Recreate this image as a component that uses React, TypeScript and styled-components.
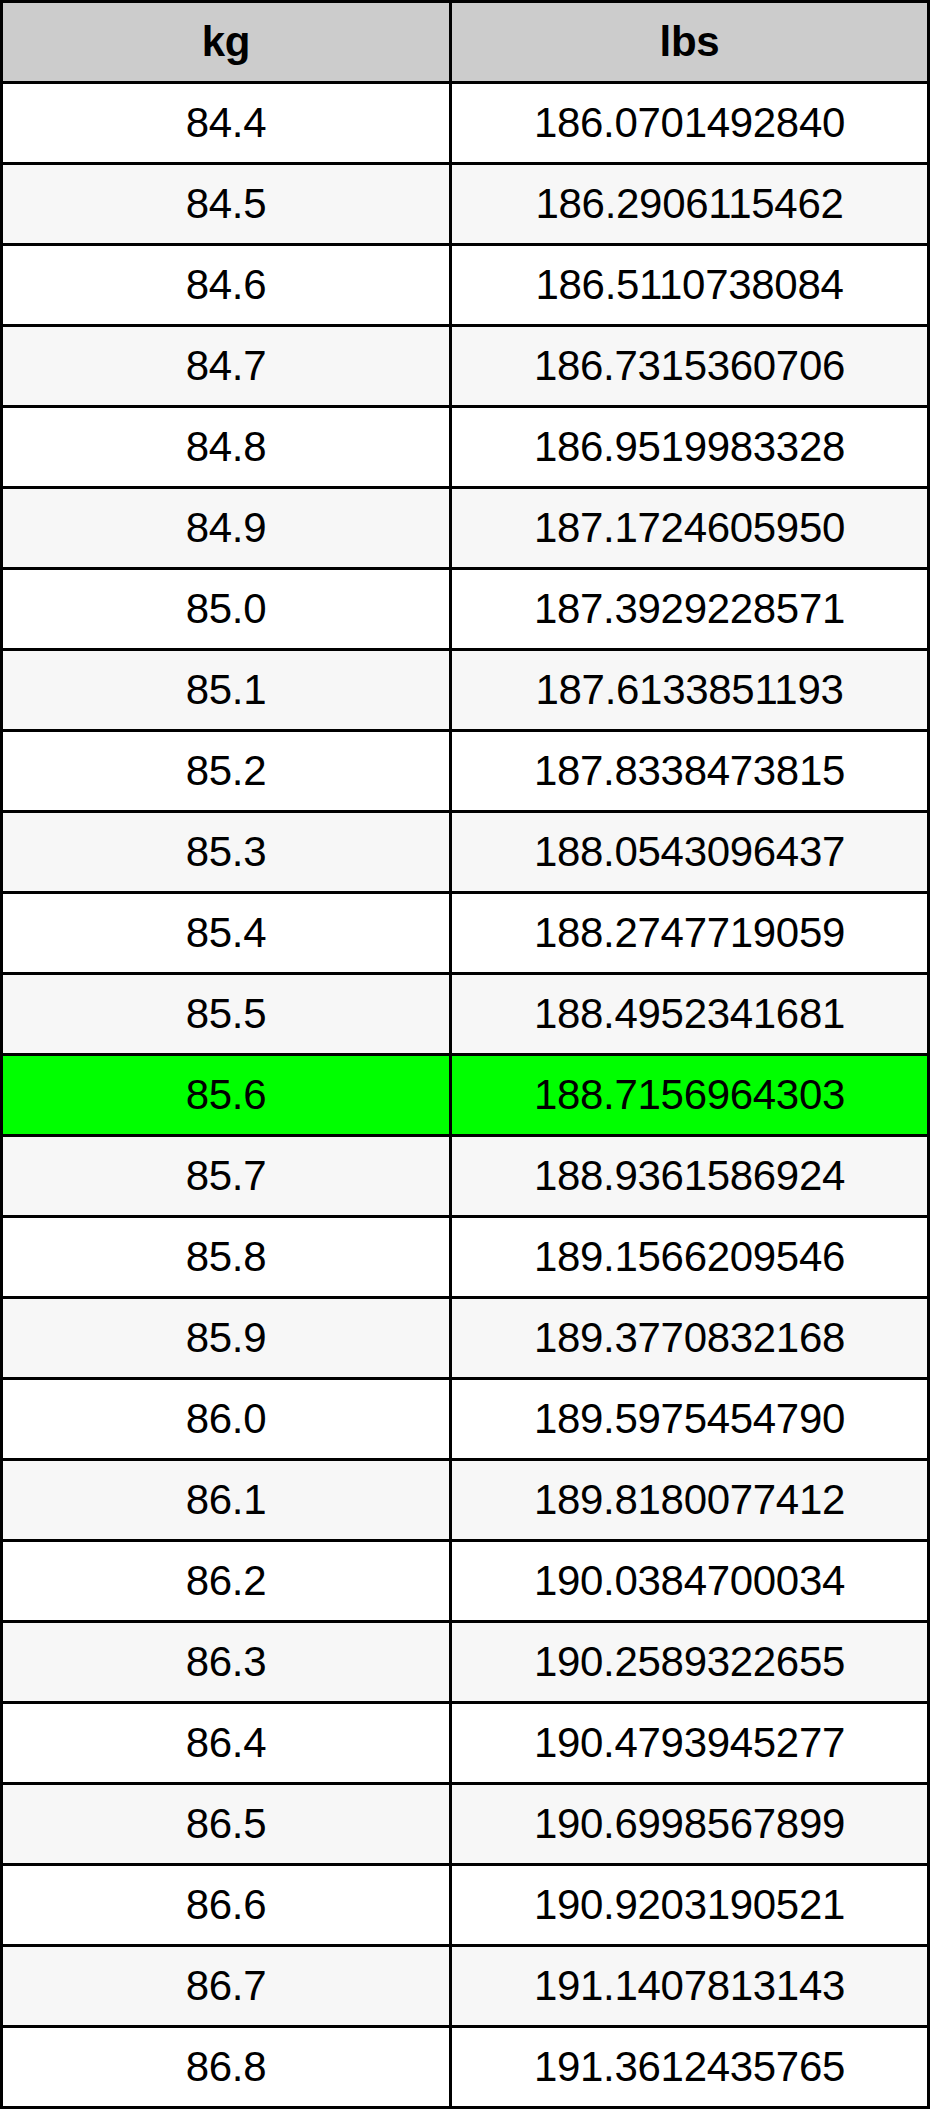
import React from 'react'
import styled, { createGlobalStyle } from 'styled-components'

const GlobalStyle = createGlobalStyle`
  html, body {
    margin: 0;
    padding: 0;
    background: #fff;
  }
`

const Table = styled.table`
  width: 930px;
  table-layout: fixed;
  border-collapse: separate;
  border-spacing: 3px;
  background: #000;
  font-family: 'Liberation Sans', Arial, sans-serif;
  font-size: 42px;
  letter-spacing: -0.3px;
  color: #000;
`

const HeadCell = styled.th`
  height: 78px;
  padding: 0;
  background: #ccc;
  font-weight: bold;
  text-align: center;
  vertical-align: middle;
`

const Cell = styled.td<{ $tone: 'plain' | 'shade' | 'hit' }>`
  height: 78px;
  padding: 0;
  text-align: center;
  vertical-align: middle;
  background: ${p => (p.$tone === 'hit' ? '#00ff00' : p.$tone === 'shade' ? '#f7f7f7' : '#fff')};
`

const rows: [string, string][] = [
  ['84.4', '186.0701492840'],
  ['84.5', '186.2906115462'],
  ['84.6', '186.5110738084'],
  ['84.7', '186.7315360706'],
  ['84.8', '186.9519983328'],
  ['84.9', '187.1724605950'],
  ['85.0', '187.3929228571'],
  ['85.1', '187.6133851193'],
  ['85.2', '187.8338473815'],
  ['85.3', '188.0543096437'],
  ['85.4', '188.2747719059'],
  ['85.5', '188.4952341681'],
  ['85.6', '188.7156964303'],
  ['85.7', '188.9361586924'],
  ['85.8', '189.1566209546'],
  ['85.9', '189.3770832168'],
  ['86.0', '189.5975454790'],
  ['86.1', '189.8180077412'],
  ['86.2', '190.0384700034'],
  ['86.3', '190.2589322655'],
  ['86.4', '190.4793945277'],
  ['86.5', '190.6998567899'],
  ['86.6', '190.9203190521'],
  ['86.7', '191.1407813143'],
  ['86.8', '191.3612435765'],
]

const highlight = '85.6'

export default function App() {
  return (
    <>
      <GlobalStyle />
      <Table>
        <colgroup>
          <col style={{ width: 446 }} />
          <col style={{ width: 475 }} />
        </colgroup>
        <thead>
          <tr>
            <HeadCell>kg</HeadCell>
            <HeadCell>lbs</HeadCell>
          </tr>
        </thead>
        <tbody>
          {rows.map(([kg, lbs], i) => {
            const tone = kg === highlight ? 'hit' : i % 2 ? 'shade' : 'plain'
            return (
              <tr key={kg}>
                <Cell $tone={tone}>{kg}</Cell>
                <Cell $tone={tone}>{lbs}</Cell>
              </tr>
            )
          })}
        </tbody>
      </Table>
    </>
  )
}
